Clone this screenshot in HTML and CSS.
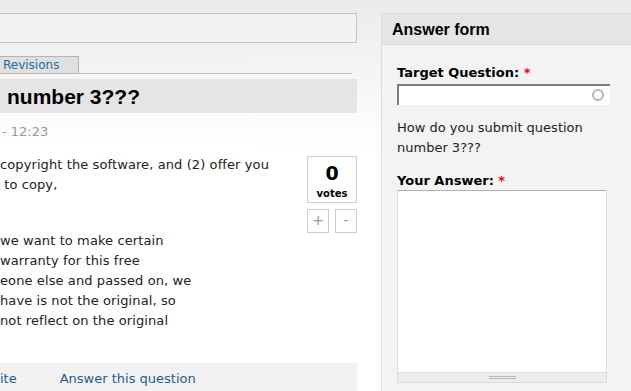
FILE: index.html
```html
<!DOCTYPE html>
<html>
<head>
<meta charset="utf-8">
<link rel="stylesheet" href="styles.css">
</head>
<body>
<div class="page">
  <div class="main">
    <div class="topbox"></div>
    <div class="tabs">
      <a class="tab" href="#">Revisions</a>
    </div>
    <h1 class="title">number 3???</h1>
    <div class="meta">- 12:23</div>
    <div class="content">
      <div class="vote">
        <div class="score"><span class="num">0</span><span class="lbl">votes</span></div>
        <div class="btns"><span class="btn">+</span><span class="btn">-</span></div>
      </div>
      <p>copyright the software, and (2) offer you<br>&nbsp;to copy,</p>
      <p>we want to make certain<br>warranty for this free<br>eone else and passed on, we<br>have is not the original, so<br>not reflect on the original</p>
    </div>
    <div class="links">
      <a href="#" class="l1">ite</a>
      <a href="#" class="l2">Answer this question</a>
    </div>
  </div>
  <div class="side">
    <div class="side-head">Answer form</div>
    <div class="side-body">
      <label class="lab">Target Question: <span class="req">*</span></label>
      <div class="input"><span class="spin"></span></div>
      <p class="desc">How do you submit question number 3???</p>
      <label class="lab">Your Answer: <span class="req">*</span></label>
      <div class="textarea">
        <div class="ta-body"></div>
        <div class="grip"><span></span></div>
      </div>
    </div>
  </div>
</div>
</body>
</html>
```
FILE: styles.css
```css
html, body { margin: 0; padding: 0; }
body {
  background: linear-gradient(#ebebeb 0, #ffffff 150px) no-repeat;
  background-color: #fff;
  font-family: "DejaVu Sans", Verdana, sans-serif;
  font-size: 13px;
  color: #222;
  width: 631px;
  height: 391px;
  overflow: hidden;
}
a { color: #1c5e92; text-decoration: none; }
.page {
  display: flex;
  gap: 24px;
  margin-left: -10px;
  padding-top: 13px;
}
.main { width: 367px; flex: none; }
.topbox {
  height: 28px;
  border: 1px solid #c4c4c4;
  background: #f2f2f2;
}
.tabs {
  margin-top: 13px;
  margin-right: 5px;
  border-bottom: 1px solid #bcbcbc;
  height: 17px;
  display: flex;
}
.tab {
  display: block;
  height: 16px;
  line-height: 17px;
  padding: 0 0 0 12px;
  width: 75px;
  box-sizing: content-box;
  background: #e0e0e0;
  border: 1px solid #b4b4b4;
  border-bottom: none;
  font-size: 12px;
  color: #2a6c9c;
}
.title {
  margin: 5px 0 0;
  height: 34px;
  line-height: 35px;
  background: #e5e5e5;
  padding-left: 17px;
  font-family: "Liberation Sans", Arial, sans-serif;
  font-size: 21px;
  font-weight: bold;
  color: #000;
}
.meta {
  margin-top: 9px;
  padding-left: 12px;
  color: #999;
  line-height: 20px;
}
.content {
  margin-top: 13px;
  padding-left: 10px;
  min-height: 180px;
}
.content p { margin: 0 0 36px; line-height: 20px; letter-spacing: 0.1px; }
.content p:last-of-type { margin-bottom: 0; }
.vote {
  float: right;
  width: 50px;
  margin-top: 1px;
  margin-left: 10px;
}
.score {
  border: 1px solid #ccc;
  box-sizing: border-box;
  height: 47px;
  display: flex;
  flex-direction: column;
  align-items: center;
  background: #fff;
}
.num {
  font-family: "DejaVu Sans", sans-serif;
  font-weight: bold;
  font-size: 19px;
  line-height: 20px;
  margin-top: 6px;
  color: #000;
}
.lbl {
  font-weight: bold;
  font-size: 10px;
  line-height: 12px;
  margin-top: 5px;
  color: #000;
}
.btns {
  margin-top: 6px;
  display: flex;
  justify-content: space-between;
}
.btn {
  width: 22px;
  height: 24px;
  box-sizing: border-box;
  border: 1px solid #ccc;
  color: #999;
  text-align: center;
  line-height: 21px;
  font-size: 14px;
}
.links {
  margin-top: 28px;
  height: 28px;
  background: #f2f2f2;
  display: flex;
  align-items: center;
  padding: 4px 0 0 10px;
  line-height: 20px;
  box-sizing: border-box;
}
.l2 { margin-left: 43px; }
.side {
  width: 260px;
  flex: none;
  border: 1px solid #dedede;
  border-bottom: none;
  background: #f3f3f3;
  height: 378px;
  box-sizing: border-box;
}
.side-head {
  height: 30px;
  line-height: 31px;
  background: #e5e5e5;
  border-bottom: 1px solid #dcdcdc;
  padding-left: 10px;
  font-family: "Liberation Sans", Arial, sans-serif;
  font-weight: bold;
  font-size: 16px;
  color: #000;
}
.side-body { padding: 20px 0 0 15px; }
.lab {
  display: block;
  font-weight: bold;
  color: #000;
  line-height: 16px;
}
.req { color: #f00; }
.input {
  margin-top: 3px;
  width: 213px;
  height: 21px;
  box-sizing: border-box;
  background: #fff;
  border-top: 2px solid #7d7d7d;
  border-left: 2px solid #7d7d7d;
  position: relative;
}
.spin {
  position: absolute;
  right: 6px;
  top: 3px;
  width: 8px;
  height: 8px;
  border: 2px solid #b5b5b5;
  border-radius: 50%;
}
.desc {
  margin: 13px 0 0;
  line-height: 20px;
  width: 215px;
}
.side-body .desc + .lab { margin-top: 15px; }
.textarea {
  margin-top: 1px;
  width: 210px;
  box-sizing: border-box;
}
.ta-body {
  height: 181px;
  background: #fff;
  border: 1px solid #dde0e4;
  border-top-color: #b0b0b0;
  border-bottom: none;
}
.grip {
  height: 9px;
  background: #ececec;
  border: 1px solid #dcdcdc;
  display: flex;
  justify-content: center;
  align-items: center;
}
.grip span {
  width: 27px;
  border-top: 1px solid #b9b9b9;
  border-bottom: 1px solid #b9b9b9;
  box-sizing: content-box;
  height: 1px;
}
```
